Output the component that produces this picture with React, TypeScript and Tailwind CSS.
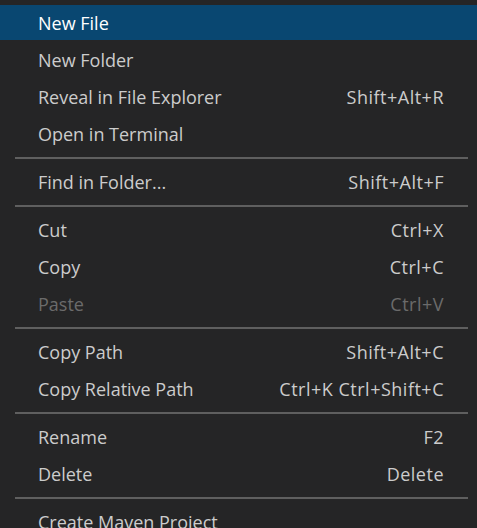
import React from "react";

type Entry =
	| {type: "item"; label: string; shortcut?: string; disabled?: boolean}
	| {type: "sep"};

const menu: Entry[] = [
	{type: "item", label: "New File"},
	{type: "item", label: "New Folder"},
	{type: "item", label: "Reveal in File Explorer", shortcut: "Shift+Alt+R"},
	{type: "item", label: "Open in Terminal"},
	{type: "sep"},
	{type: "item", label: "Find in Folder...", shortcut: "Shift+Alt+F"},
	{type: "sep"},
	{type: "item", label: "Cut", shortcut: "Ctrl+X"},
	{type: "item", label: "Copy", shortcut: "Ctrl+C"},
	{type: "item", label: "Paste", shortcut: "Ctrl+V", disabled: true},
	{type: "sep"},
	{type: "item", label: "Copy Path", shortcut: "Shift+Alt+C"},
	{type: "item", label: "Copy Relative Path", shortcut: "Ctrl+K Ctrl+Shift+C"},
	{type: "sep"},
	{type: "item", label: "Rename", shortcut: "F2"},
	{type: "item", label: "Delete", shortcut: "Delete"},
	{type: "sep"},
	{type: "item", label: "Create Maven Project"},
];

export default function App() {
	return (
		<div
			className="w-[477px] h-[528px] overflow-hidden bg-[#252526] pt-[5px] text-[18px] text-[#cccccc]"
			style={{fontFamily: '"Open Sans", sans-serif'}}>
			{menu.map((e, i) => {
				if (e.type === "sep") {
					return (
						<div key={i} className="pt-[6px] pb-[3px] pl-[15px] pr-[9px]">
							<div className="h-[2px] bg-[#5f5f5f]" />
						</div>
					);
				}
				const active = i === 0;
				return (
					<div
						key={i}
						className={`flex items-center justify-between pl-[38px] pr-[33px] ${
							active ? "h-[35px] pt-[1px] bg-[#094771] text-white" : "h-[37px] pt-[3px]"
						} ${e.disabled ? "text-[#6b6b6b]" : ""}`}>
						<span className="whitespace-nowrap">{e.label}</span>
						{e.shortcut && (
							<span className="whitespace-nowrap tracking-[0.5px]">{e.shortcut}</span>
						)}
					</div>
				);
			})}
		</div>
	);
}
